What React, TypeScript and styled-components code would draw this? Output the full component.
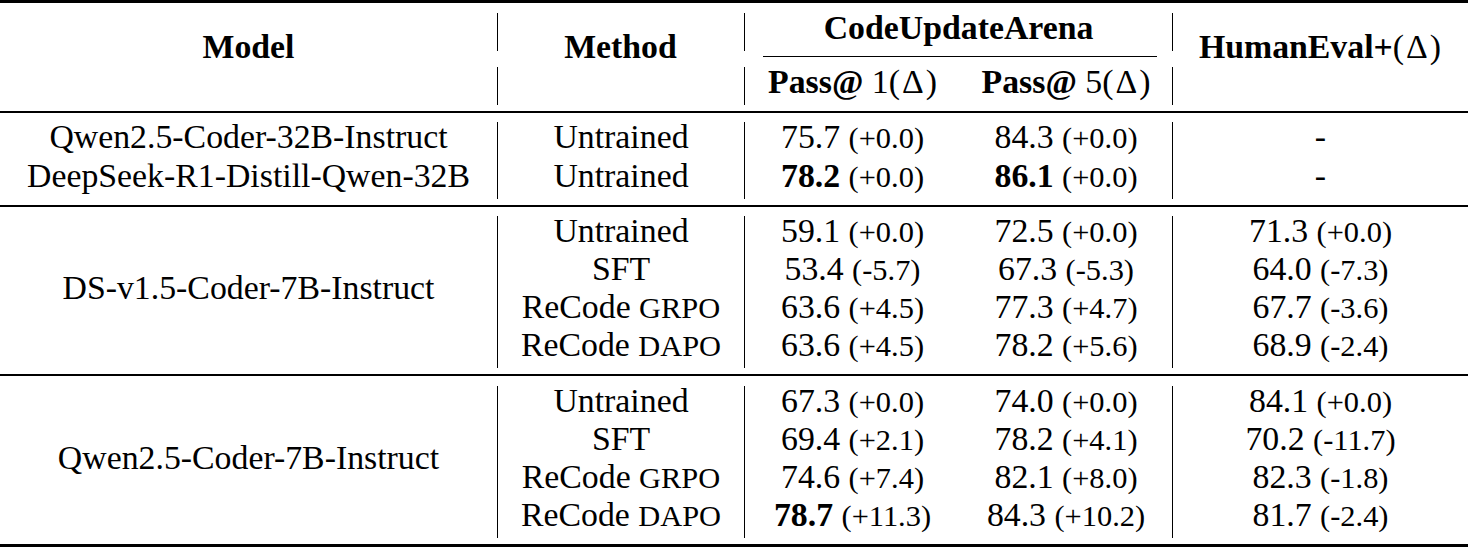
import React from 'react';
import styled, { createGlobalStyle } from 'styled-components';

const COLS = '497px 247px 216px 212px 296px';
const ROW = 38.1;

const GlobalStyle = createGlobalStyle`
	html, body {
		margin: 0;
		padding: 0;
		background: #fff;
	}
	body {
		font-family: "Liberation Serif", "Times New Roman", serif;
		font-size: 33.8px;
		color: #000;
	}
`;

const Table = styled.div`
	width: 1468px;
	display: flex;
	flex-direction: column;
`;

const Rule = styled.div<{ $h: number }>`
	height: ${(p) => p.$h}px;
	background: #000;
`;

const Head = styled.div`
	display: grid;
	grid-template-columns: ${COLS};
	grid-template-rows: ${ROW}px 16.2px ${ROW}px;
	padding: 9.6px 0 6px;
	font-weight: 700;
	line-height: 30.4px;
	text-align: center;
	white-space: nowrap;
`;

const HeadSpan = styled.div<{ $line?: boolean; $col?: number }>`
	grid-row: 1 / 4;
	grid-column: ${(p) => p.$col ?? 'auto'};
	padding-top: 19.4px;
	background: ${(p) =>
		p.$line
			? `linear-gradient(#000, #000) left top / 1px ${ROW}px no-repeat,
			   linear-gradient(#000, #000) left bottom / 1px ${ROW}px no-repeat`
			: 'none'};
`;

const ArenaTitle = styled.div`
	grid-column: 3 / 5;
	grid-row: 1;
	border-left: 1px solid #000;
`;

const CMidRule = styled.div`
	grid-column: 3 / 5;
	grid-row: 2;
	align-self: start;
	height: 1px;
	margin: 5.8px 15px 0 19px;
	background: #000;
`;

const PassHead = styled.div<{ $line?: boolean }>`
	grid-row: 3;
	border-left: ${(p) => (p.$line ? '1px solid #000' : 'none')};
`;

// math-mode part of a header: upright, not bold, with the wider TeX delta
const MathPart = styled.span`
	font-weight: 400;
`;

const DeltaSym = styled.span`
	padding: 0 0.06em;
`;

const Group = styled.div`
	display: grid;
	grid-template-columns: ${COLS};
	grid-auto-rows: ${ROW}px;
	padding: 9.5px 0 5.9px;
	line-height: 30.4px;
	text-align: center;
	white-space: nowrap;
`;

const Cell = styled.div<{ $line?: boolean; $span?: number }>`
	border-left: ${(p) => (p.$line ? '1px solid #000' : 'none')};
	grid-row: ${(p) => (p.$span ? `span ${p.$span}` : 'auto')};
	padding-top: ${(p) => (p.$span ? ((p.$span - 1) * ROW) / 2 : 0)}px;
`;

const Num = styled.span<{ $bold?: boolean }>`
	font-weight: ${(p) => (p.$bold ? 700 : 400)};
`;

const Delta = styled.span`
	font-size: 0.9em;
`;

const Algo = styled.span`
	font-size: 0.9em;
`;

type Score = [string, string, boolean?];

type Row = {
	method: string;
	algo?: string;
	p1: Score;
	p5: Score;
	he: Score | null;
};

type Block = {
	model?: string;
	models?: string[];
	rows: Row[];
};

const BLOCKS: Block[] = [
	{
		models: ['Qwen2.5-Coder-32B-Instruct', 'DeepSeek-R1-Distill-Qwen-32B'],
		rows: [
			{ method: 'Untrained', p1: ['75.7', '(+0.0)'], p5: ['84.3', '(+0.0)'], he: null },
			{ method: 'Untrained', p1: ['78.2', '(+0.0)', true], p5: ['86.1', '(+0.0)', true], he: null },
		],
	},
	{
		model: 'DS-v1.5-Coder-7B-Instruct',
		rows: [
			{ method: 'Untrained', p1: ['59.1', '(+0.0)'], p5: ['72.5', '(+0.0)'], he: ['71.3', '(+0.0)'] },
			{ method: 'SFT', p1: ['53.4', '(-5.7)'], p5: ['67.3', '(-5.3)'], he: ['64.0', '(-7.3)'] },
			{ method: 'ReCode', algo: 'GRPO', p1: ['63.6', '(+4.5)'], p5: ['77.3', '(+4.7)'], he: ['67.7', '(-3.6)'] },
			{ method: 'ReCode', algo: 'DAPO', p1: ['63.6', '(+4.5)'], p5: ['78.2', '(+5.6)'], he: ['68.9', '(-2.4)'] },
		],
	},
	{
		model: 'Qwen2.5-Coder-7B-Instruct',
		rows: [
			{ method: 'Untrained', p1: ['67.3', '(+0.0)'], p5: ['74.0', '(+0.0)'], he: ['84.1', '(+0.0)'] },
			{ method: 'SFT', p1: ['69.4', '(+2.1)'], p5: ['78.2', '(+4.1)'], he: ['70.2', '(-11.7)'] },
			{ method: 'ReCode', algo: 'GRPO', p1: ['74.6', '(+7.4)'], p5: ['82.1', '(+8.0)'], he: ['82.3', '(-1.8)'] },
			{ method: 'ReCode', algo: 'DAPO', p1: ['78.7', '(+11.3)', true], p5: ['84.3', '(+10.2)'], he: ['81.7', '(-2.4)'] },
		],
	},
];

const ScoreText: React.FC<{ s: Score }> = ({ s }) => (
	<>
		<Num $bold={s[2]}>{s[0]}</Num> <Delta>{s[1]}</Delta>
	</>
);

const DeltaMath: React.FC<{ lead?: string }> = ({ lead }) => (
	<MathPart>
		{lead}(<DeltaSym>Δ</DeltaSym>)
	</MathPart>
);

const BodyBlock: React.FC<{ block: Block }> = ({ block }) => (
	<Group>
		{block.rows.map((r, i) => (
			<React.Fragment key={i}>
				{block.models && <Cell>{block.models[i]}</Cell>}
				{block.model && i === 0 && <Cell $span={block.rows.length}>{block.model}</Cell>}
				<Cell $line>
					{r.method}
					{r.algo && (
						<>
							{' '}
							<Algo>{r.algo}</Algo>
						</>
					)}
				</Cell>
				<Cell $line>
					<ScoreText s={r.p1} />
				</Cell>
				<Cell>
					<ScoreText s={r.p5} />
				</Cell>
				<Cell $line>{r.he ? <ScoreText s={r.he} /> : '-'}</Cell>
			</React.Fragment>
		))}
	</Group>
);

export default function App() {
	return (
		<>
			<GlobalStyle />
			<Table>
				<Rule $h={3} />
				<Head>
					<HeadSpan>Model</HeadSpan>
					<HeadSpan $line>Method</HeadSpan>
					<ArenaTitle>CodeUpdateArena</ArenaTitle>
					<CMidRule />
					<PassHead $line>
						Pass@ <DeltaMath lead="1" />
					</PassHead>
					<PassHead>
						Pass@ <DeltaMath lead="5" />
					</PassHead>
					<HeadSpan $line $col={5}>
						HumanEval+<DeltaMath />
					</HeadSpan>
				</Head>
				{BLOCKS.map((b, i) => (
					<React.Fragment key={i}>
						<Rule $h={2} />
						<BodyBlock block={b} />
					</React.Fragment>
				))}
				<Rule $h={3} />
			</Table>
		</>
	);
}
